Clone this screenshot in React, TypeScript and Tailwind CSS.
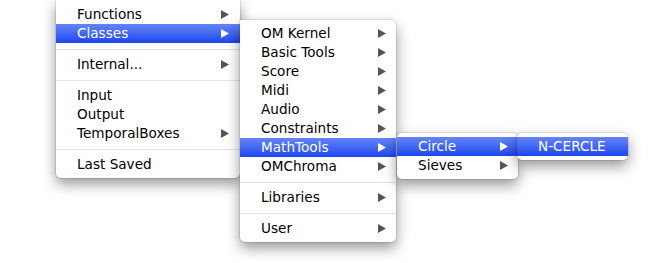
import React from "react";

type Item = { label: string; sub?: boolean; active?: boolean } | "sep";

const Arrow = ({ active }: { active?: boolean }) => (
  <svg width="8" height="9" viewBox="0 0 8 9" className={active ? "text-white" : "text-[#555555]"}>
    <path d="M0 0 L8 4.5 L0 9 Z" fill="currentColor" />
  </svg>
);

const Menu = ({
  items,
  className,
  rowPad = "pr-[11px]",
}: {
  items: Item[];
  className: string;
  rowPad?: string;
}) => (
  <div
    className={`absolute bg-white pb-[4px] shadow-[0_0_0_1px_rgba(0,0,0,0.09),0_6px_14px_rgba(0,0,0,0.42)] ${className}`}
  >
    {items.map((it, i) =>
      it === "sep" ? (
        <div key={i} className="h-[12px] flex items-center">
          <div className="h-px w-full bg-[#e2e2e2]" />
        </div>
      ) : (
        <div
          key={i}
          className={`h-[19px] flex items-center justify-between pl-[21px] ${rowPad} ${
            it.active
              ? "bg-gradient-to-b from-[#6684f7] to-[#1f43ef] text-white"
              : "text-black"
          }`}
        >
          <span className="leading-none whitespace-nowrap">{it.label}</span>
          {it.sub && <Arrow active={it.active} />}
        </div>
      )
    )}
  </div>
);

export default function App() {
  return (
    <div
      className="relative w-[668px] h-[263px] bg-white overflow-hidden text-[13.6px]"
      style={{ fontFamily: '"DejaVu Sans", Verdana, sans-serif' }}
    >
      {/* main menu, its top runs past the window edge */}
      <Menu
        className="left-[56px] top-0 pt-[5px] w-[184px] rounded-b-[5px]"
        items={[
          { label: "Functions", sub: true },
          { label: "Classes", sub: true, active: true },
          "sep",
          { label: "Internal...", sub: true },
          "sep",
          { label: "Input" },
          { label: "Output" },
          { label: "TemporalBoxes", sub: true },
          "sep",
          { label: "Last Saved" },
        ]}
      />

      <Menu
        className="left-[240px] top-[20px] pt-[4px] w-[156px] rounded-[5px] rounded-tl-none"
        rowPad="pr-[10px]"
        items={[
          { label: "OM Kernel", sub: true },
          { label: "Basic Tools", sub: true },
          { label: "Score", sub: true },
          { label: "Midi", sub: true },
          { label: "Audio", sub: true },
          { label: "Constraints", sub: true },
          { label: "MathTools", sub: true, active: true },
          { label: "OMChroma", sub: true },
          "sep",
          { label: "Libraries", sub: true },
          "sep",
          { label: "User", sub: true },
        ]}
      />

      <Menu
        className="left-[397px] top-[133px] pt-[4px] w-[121px] rounded-[5px]"
        rowPad="pr-[10px]"
        items={[
          { label: "Circle", sub: true, active: true },
          { label: "Sieves", sub: true },
        ]}
      />

      <Menu
        className="left-[517px] top-[133px] pt-[4px] w-[111px] rounded-[5px]"
        items={[{ label: "N-CERCLE", active: true }]}
      />
    </div>
  );
}
